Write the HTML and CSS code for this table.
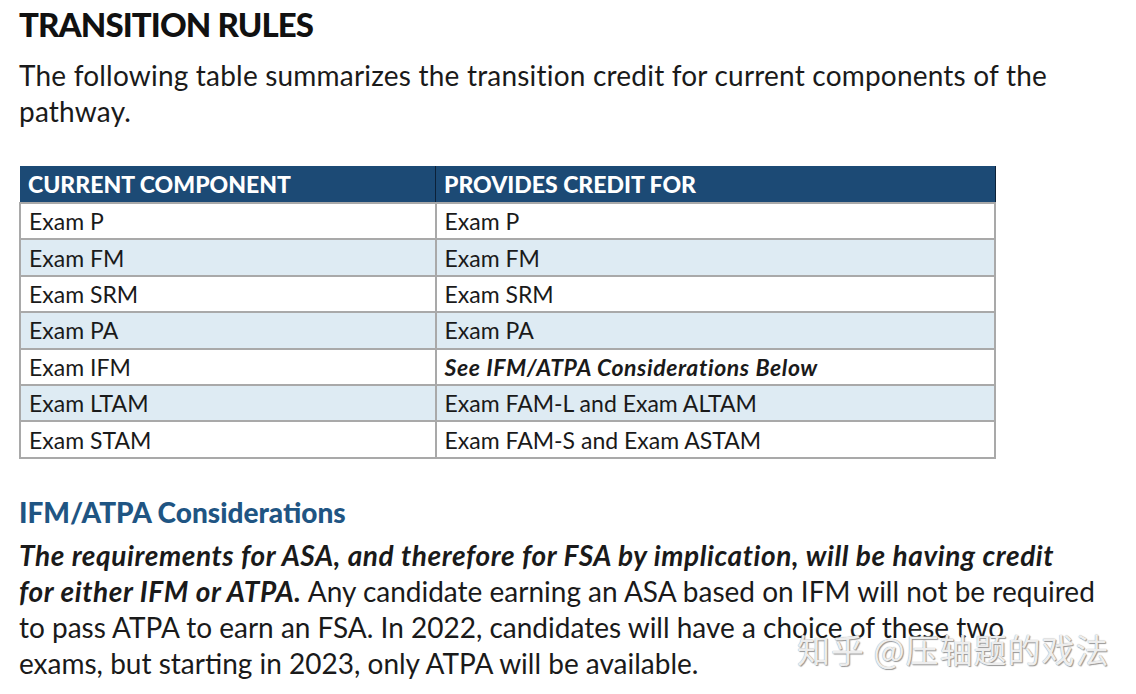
FILE: index.html
```html
<!DOCTYPE html>
<html>
<head>
<meta charset="utf-8">
<link rel="stylesheet" href="styles.css">
</head>
<body>
<main class="page">
  <h1 class="title">TRANSITION RULES</h1>
  <p class="lead">The following table summarizes the transition credit for current components of the pathway.</p>
  <table class="rules">
    <thead>
      <tr><th class="col1">CURRENT COMPONENT</th><th>PROVIDES CREDIT FOR</th></tr>
    </thead>
    <tbody>
      <tr><td>Exam P</td><td>Exam P</td></tr>
      <tr class="alt"><td>Exam FM</td><td>Exam FM</td></tr>
      <tr><td>Exam SRM</td><td>Exam SRM</td></tr>
      <tr class="alt"><td>Exam PA</td><td>Exam PA</td></tr>
      <tr><td>Exam IFM</td><td class="em">See IFM/ATPA Considerations Below</td></tr>
      <tr class="alt"><td>Exam LTAM</td><td>Exam FAM-L and Exam ALTAM</td></tr>
      <tr><td>Exam STAM</td><td>Exam FAM-S and Exam ASTAM</td></tr>
    </tbody>
  </table>
  <h2 class="sub">IFM/ATPA Considerations</h2>
  <p class="body"><strong class="em">The requirements for ASA, and therefore for FSA by implication, will be having credit<br>for either IFM or ATPA.</strong> Any candidate earning an ASA based on IFM will not be required<br>to pass ATPA to earn an FSA. In 2022, candidates will have a choice of these two<br>exams, but starting in 2023, only ATPA will be available.</p>
</main>
<div class="watermark">知乎 @压轴题的戏法</div>
</body>
</html>
```
FILE: styles.css
```css
html, body {
  margin: 0;
  padding: 0;
  background: #ffffff;
}
body {
  font-family: Lato, "Noto Sans", sans-serif;
  color: #1a1a1a;
  width: 1136px;
  height: 694px;
  overflow: hidden;
  position: relative;
}
.page {
  padding: 4px 36px 0 19px;
}
.title {
  margin: 0;
  font-size: 33px;
  font-weight: 900;
  line-height: 40px;
  letter-spacing: -0.9px;
  color: #111;
}
.lead {
  margin: 13px 0 0;
  font-size: 28px;
  line-height: 36px;
  letter-spacing: 0.2px;
}
.rules {
  margin-top: 37px;
  width: 977px;
  border-collapse: collapse;
  font-size: 23px;
}
.rules th {
  background: #1c4a75;
  color: #fff;
  font-weight: 900;
  text-align: left;
  height: 36px;
  padding: 0 8px;
  border-right: 1px solid #0c2138;
}
.rules th.col1 { width: 399px; }
.rules td {
  height: 34.4px;
  padding: 0 8px;
  border: 2px solid #a9a9a9;
  border-right: 1px solid #333;
}
.rules td:last-child { border-right: 2px solid #a9a9a9; }
.rules tr.alt td { background: #deebf3; }
.rules .em { font-style: italic; font-weight: 700; letter-spacing: 0.6px; }
.sub {
  margin: 35px 0 0;
  font-size: 28px;
  font-weight: 900;
  color: #1f5583;
  line-height: 36px;
}
.body {
  margin: 7px 0 0;
  font-size: 28px;
  line-height: 36px;
  letter-spacing: 0;
  white-space: nowrap;
}
.body .em { font-style: italic; font-weight: 700; letter-spacing: 0.6px; }
.watermark {
  position: absolute;
  left: 797px;
  top: 627px;
  font-family: "Noto Sans CJK SC", sans-serif;
  font-size: 33px;
  line-height: 44px;
  color: rgba(252, 252, 252, 0.9);
  text-shadow: 0 0 1px #888, 1px 1px 1px #999;
  letter-spacing: 1px;
}
```
